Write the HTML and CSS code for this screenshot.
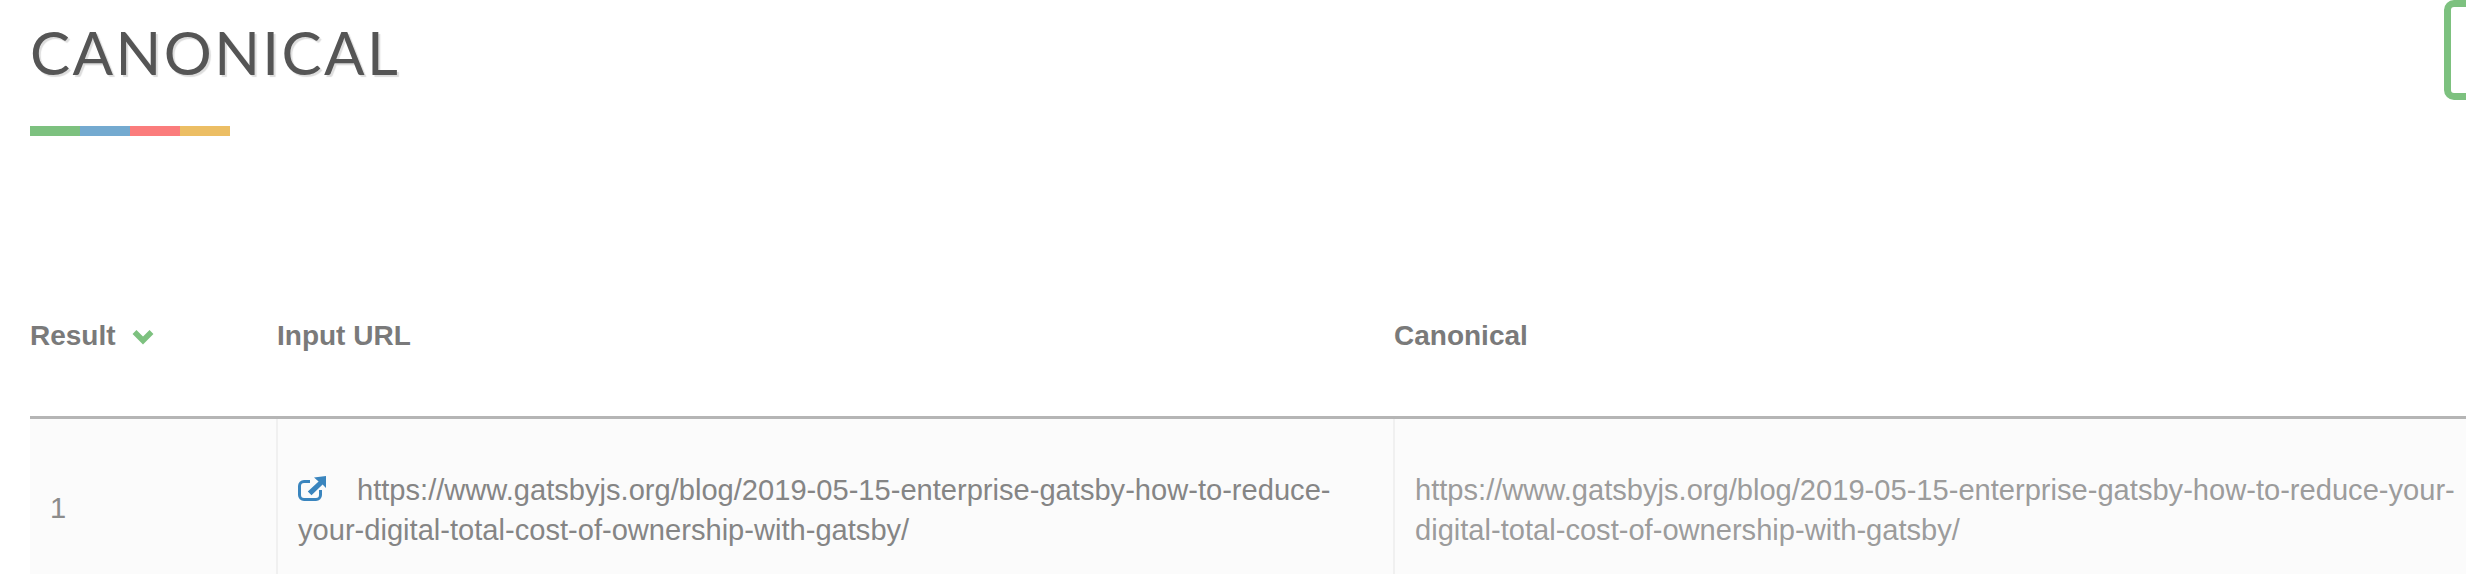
FILE: index.html
```html
<!DOCTYPE html>
<html lang="en">
<head>
    <meta charset="UTF-8">
    <title>Canonical</title>
    <link rel="stylesheet" href="styles.css">
</head>
<body>
    <div class="page-header">
        <div>
            <h1 class="page-title">CANONICAL</h1>
            <div class="color-bar">
                <span class="green"></span>
                <span class="blue"></span>
                <span class="red"></span>
                <span class="yellow"></span>
            </div>
        </div>
        <div class="export-btn"></div>
    </div>

    <table class="results">
        <thead>
            <tr>
                <th class="col-result">Result
                    <svg class="sort-icon" viewBox="0 0 22 16">
                        <path d="M2.5 3 11 11.5 19.5 3" />
                    </svg>
                </th>
                <th class="col-input">Input URL</th>
                <th>Canonical</th>
            </tr>
        </thead>
        <tbody>
            <tr>
                <td class="row-num">1</td>
                <td class="input-url">
                    <svg class="link-icon" viewBox="0 0 28 25">
                        <path class="box" d="M12 5.5H6a4.5 4.5 0 0 0-4.5 4.5v9A4.5 4.5 0 0 0 6 23.5h12a4.5 4.5 0 0 0 4.5-4.5v-5" />
                        <path class="arrow" d="M16 1.5 28 0V12L24.6 8.6 13.5 19.2 9.8 15.6 20.6 5.4z" />
                    </svg>https://www.gatsbyjs.org/blog/2019-05-15-enterprise-gatsby-how-to-reduce-your-digital-total-cost-of-ownership-with-gatsby/
                </td>
                <td class="canonical-url">https://www.gatsbyjs.org/blog/2019-05-15-enterprise-gatsby-how-to-reduce-your-digital-total-cost-of-ownership-with-gatsby/</td>
            </tr>
        </tbody>
    </table>
</body>
</html>
```

FILE: styles.css
```css
* {
    margin: 0;
    padding: 0;
    box-sizing: border-box;
}

html, body {
    height: 574px;
    overflow: hidden;
}

body {
    font-family: "Liberation Sans", Arial, sans-serif;
    background: #fff;
    padding-left: 30px;
}

.page-header {
    display: flex;
    justify-content: space-between;
    align-items: flex-start;
    height: 136px;
}

.page-title {
    font-family: Lato, Inter, sans-serif;
    font-size: 60px;
    font-weight: 400;
    line-height: 60px;
    letter-spacing: 2.4px;
    margin-top: 22px;
    color: #555;
    text-shadow: 2px 2px 1px #ddd;
}

.color-bar {
    display: flex;
    margin-top: 44px;
    height: 10px;
    width: 200px;
}

.color-bar span {
    flex: 1;
}

.green { background: #7dc17f; }
.blue { background: #74aad0; }
.red { background: #fb7c7c; }
.yellow { background: #ecbe64; }

.export-btn {
    width: 60px;
    height: 100px;
    margin-right: -38px;
    border: 7px solid #7dc17f;
    border-radius: 10px;
}

.results {
    table-layout: fixed;
    border-collapse: collapse;
    width: 2436px;
}

.results th {
    padding: 148px 0 0 0;
    height: 281px;
    vertical-align: top;
    text-align: left;
    font-size: 28px;
    line-height: 104px;
    color: #7a7a7a;
    border-bottom: 3px solid #b5b5b5;
}

.col-result {
    width: 247px;
}

.col-input {
    width: 1117px;
}

.sort-icon {
    width: 22px;
    height: 16px;
    margin-left: 9px;
    fill: none;
    stroke: #7dc17f;
    stroke-width: 5.5;
}

.results td {
    height: 180px;
    padding: 4px 20px 0;
    background: #fbfbfb;
    font-size: 29.1px;
    line-height: 40px;
    color: #858585;
    vertical-align: middle;
    border-left: 2px solid #f0f0f0;
}

.results td.row-num {
    padding-top: 0;
    border-left: 0;
    color: #8c8c8c;
}

.results td.canonical-url {
    padding-right: 4px;
    color: #9c9c9c;
}

.link-icon {
    width: 28px;
    height: 25px;
    margin-right: 31px;
    vertical-align: -1px;
}

.link-icon .box {
    fill: none;
    stroke: #3a85be;
    stroke-width: 3;
}

.link-icon .arrow {
    fill: #3a85be;
}
```
